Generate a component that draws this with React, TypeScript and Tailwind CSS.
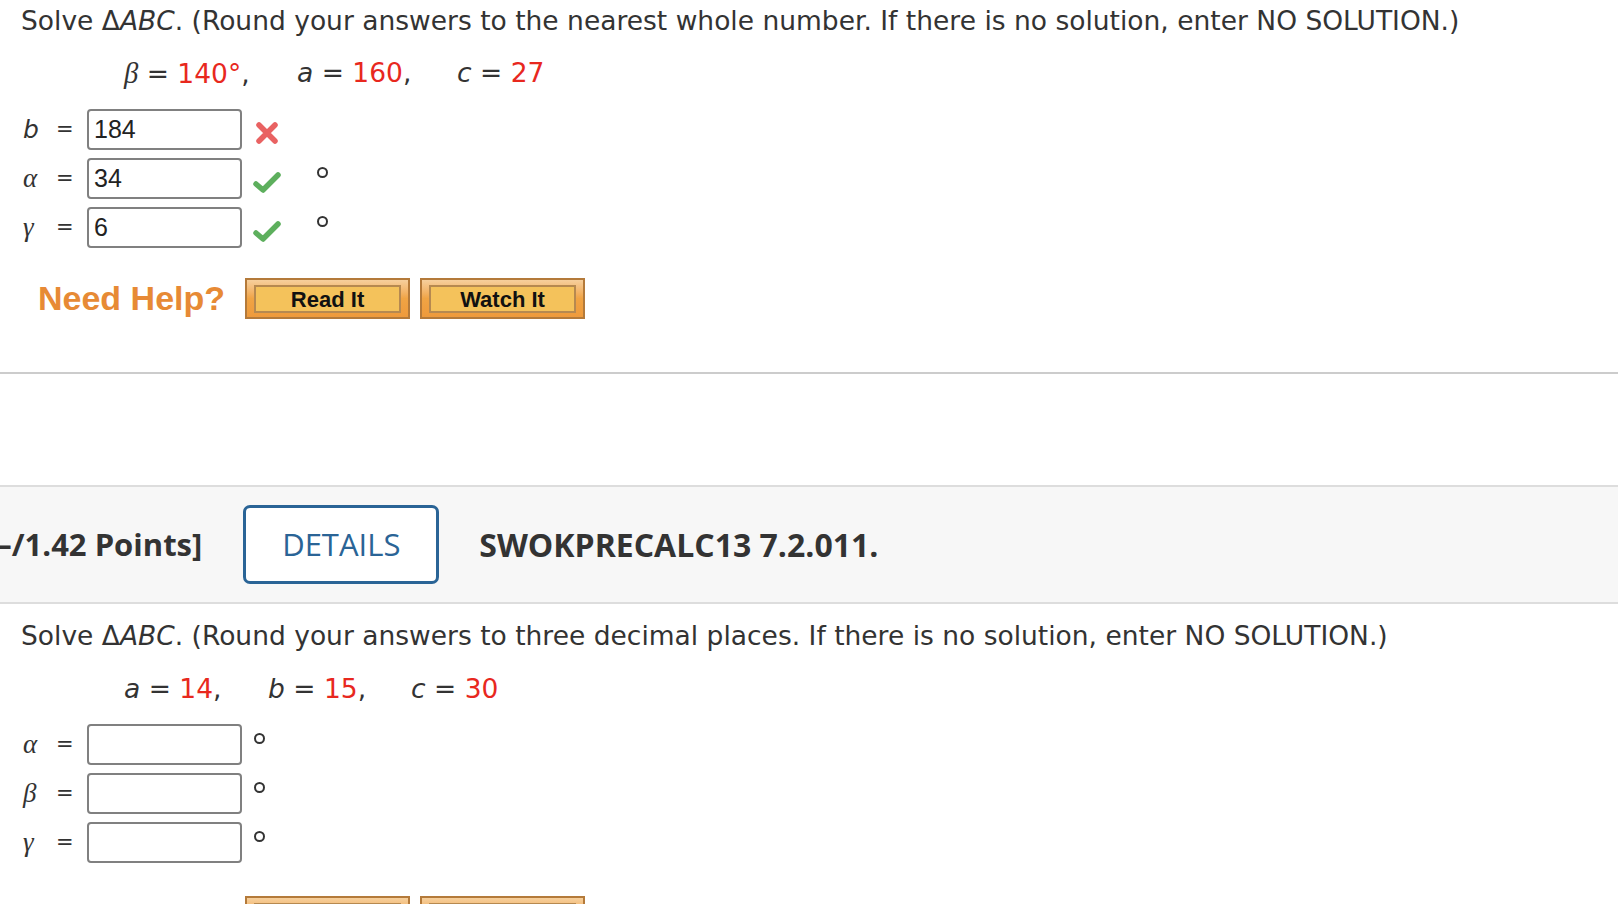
import React from 'react';

const verdana = { fontFamily: '"DejaVu Sans", Verdana, sans-serif' };

function Red({ children }: { children: React.ReactNode }) {
  return <span className="text-[#e8281e]">{children}</span>;
}

function Var({ children, greek = false }: { children: React.ReactNode; greek?: boolean }) {
  return (
    <span
      className="italic"
      style={greek ? { fontFamily: '"Liberation Serif", serif', fontSize: '1.08em' } : undefined}
    >
      {children}
    </span>
  );
}

function CrossIcon() {
  return (
    <svg width="28" height="28" viewBox="0 0 28 28">
      <path d="M6 6 L22 22 M22 6 L6 22" stroke="#e96262" strokeWidth="5.5" strokeLinecap="round" />
    </svg>
  );
}

function CheckIcon() {
  return (
    <svg width="30" height="26" viewBox="0 0 30 26">
      <path d="M4 15 L11 21 L26 6" fill="none" stroke="#5daf5d" strokeWidth="5.5" strokeLinecap="round" strokeLinejoin="round" />
    </svg>
  );
}

function Degree() {
  return <span className="block h-[11px] w-[11px] rounded-full border-[2.5px] border-[#333]" />;
}

type Row = {
  label: string;
  greek: boolean;
  value: string;
  mark?: 'ok' | 'bad';
  degree: boolean;
};

function AnswerRows({ rows, withMarks }: { rows: Row[]; withMarks: boolean }) {
  return (
    <div className="flex flex-col gap-[8px]">
      {rows.map((r, i) => (
        <div key={i} className="flex h-[41px] items-center">
          <div className="flex w-[87px] items-center pl-[23px] text-[25px] text-[#333]" style={verdana}>
            <span className="w-[33px]">
              <Var greek={r.greek}>{r.label}</Var>
            </span>
            <span className="text-[21px]">=</span>
          </div>
          <div
            className="flex h-[41px] w-[155px] items-center rounded-[4px] border-2 border-[#808080] bg-white pl-[5px] text-[25px] text-[#222]"
            style={{ fontFamily: '"Liberation Sans", Arial, sans-serif' }}
          >
            {r.value}
          </div>
          {withMarks && (
            <div className="flex w-[50px] items-center justify-center pt-[6px]">
              {r.mark === 'bad' && <CrossIcon />}
              {r.mark === 'ok' && <CheckIcon />}
            </div>
          )}
          {r.degree && (
            <div className={`self-start pt-[9px] ${withMarks ? 'ml-[25px]' : 'ml-[12px]'}`}>
              <Degree />
            </div>
          )}
        </div>
      ))}
    </div>
  );
}

function HelpButton({ label }: { label: string }) {
  return (
    <div className="h-[41px] w-[165px] border-2 border-[#b47a3a] bg-gradient-to-b from-[#f6cf9c] via-[#f0a444] to-[#ee9a3c] px-[7px] pt-[5px] pb-[4px]">
      <div
        className="flex h-full items-center justify-center border-2 border-[#b68950] bg-[#f4c25b] text-[22px] font-bold text-[#111]"
        style={{ fontFamily: '"Liberation Sans", Arial, sans-serif' }}
      >
        {label}
      </div>
    </div>
  );
}

function NeedHelp() {
  return (
    <div className="flex items-center pl-[38px]">
      <span
        className="mr-[20px] text-[34px] font-bold text-[#e78a35]"
        style={{ fontFamily: '"Liberation Sans", Arial, sans-serif' }}
      >
        Need Help?
      </span>
      <div className="flex gap-[10px]">
        <HelpButton label="Read It" />
        <HelpButton label="Watch It" />
      </div>
    </div>
  );
}

function Given({ items }: { items: { v: string; greek: boolean; val: string; w: string }[] }) {
  return (
    <div className="flex h-[32px] items-center pl-[124px] text-[26.5px] text-[#333]" style={verdana}>
      {items.map((it, i) => (
        <span key={i} className={`whitespace-pre ${it.w}`}>
          <Var greek={it.greek}>{it.v}</Var> = <Red>{it.val}</Red>
          {i < items.length - 1 ? ',' : ''}
        </span>
      ))}
    </div>
  );
}

export default function App() {
  return (
    <div className="h-[904px] w-[1618px] overflow-hidden bg-white">
      {/* problem 1 */}
      <div className="pt-[5px]">
        <div className="h-[32px] whitespace-nowrap pl-[21px] text-[26.5px] leading-[32px] text-[#333]" style={verdana}>
          Solve Δ<span className="italic">ABC</span>. (Round your answers to the nearest whole number. If there is no
          solution, enter NO SOLUTION.)
        </div>
        <div className="mt-[20px]">
          <Given
            items={[
              { v: 'β', greek: true, val: '140°', w: 'w-[173px]' },
              { v: 'a', greek: false, val: '160', w: 'w-[160px]' },
              { v: 'c', greek: false, val: '27', w: '' },
            ]}
          />
        </div>
        <div className="mt-[20px]">
          <AnswerRows
            withMarks
            rows={[
              { label: 'b', greek: false, value: '184', mark: 'bad', degree: false },
              { label: 'α', greek: true, value: '34', mark: 'ok', degree: true },
              { label: 'γ', greek: true, value: '6', mark: 'ok', degree: true },
            ]}
          />
        </div>
        <div className="mt-[25px]">
          <NeedHelp />
        </div>
      </div>

      <div className="mt-[48px] h-[2px] bg-[#cccccc]" />

      {/* question header */}
      <div className="mt-[111px] flex h-[119px] items-center border-y-2 border-[#dddddd] bg-[#f7f7f7]">
        <div
          className="-ml-[14px] text-[31px] font-bold text-[#333]"
          style={{ fontFamily: '"Open Sans", sans-serif' }}
        >
          [–/1.42 Points]
        </div>
        <div
          className="ml-[41px] flex h-[79px] w-[196px] items-center justify-center rounded-[7px] border-[3px] border-[#2a6496] bg-white text-[31px] font-medium text-[#2a6496]"
          style={{ fontFamily: '"Open Sans", sans-serif' }}
        >
          DETAILS
        </div>
        <div
          className="ml-[40px] text-[32px] font-bold text-[#333]"
          style={{ fontFamily: '"Open Sans", sans-serif' }}
        >
          SWOKPRECALC13 7.2.011.
        </div>
      </div>

      {/* problem 2 */}
      <div className="pt-[16px]">
        <div className="h-[32px] whitespace-nowrap pl-[21px] text-[26.5px] leading-[32px] text-[#333]" style={verdana}>
          Solve Δ<span className="italic">ABC</span>. (Round your answers to three decimal places. If there is no
          solution, enter NO SOLUTION.)
        </div>
        <div className="mt-[21px]">
          <Given
            items={[
              { v: 'a', greek: false, val: '14', w: 'w-[144px]' },
              { v: 'b', greek: false, val: '15', w: 'w-[143px]' },
              { v: 'c', greek: false, val: '30', w: '' },
            ]}
          />
        </div>
        <div className="mt-[19px]">
          <AnswerRows
            withMarks={false}
            rows={[
              { label: 'α', greek: true, value: '', degree: true },
              { label: 'β', greek: true, value: '', degree: true },
              { label: 'γ', greek: true, value: '', degree: true },
            ]}
          />
        </div>
        <div className="mt-[28px]">
          <NeedHelp />
        </div>
      </div>
    </div>
  );
}
